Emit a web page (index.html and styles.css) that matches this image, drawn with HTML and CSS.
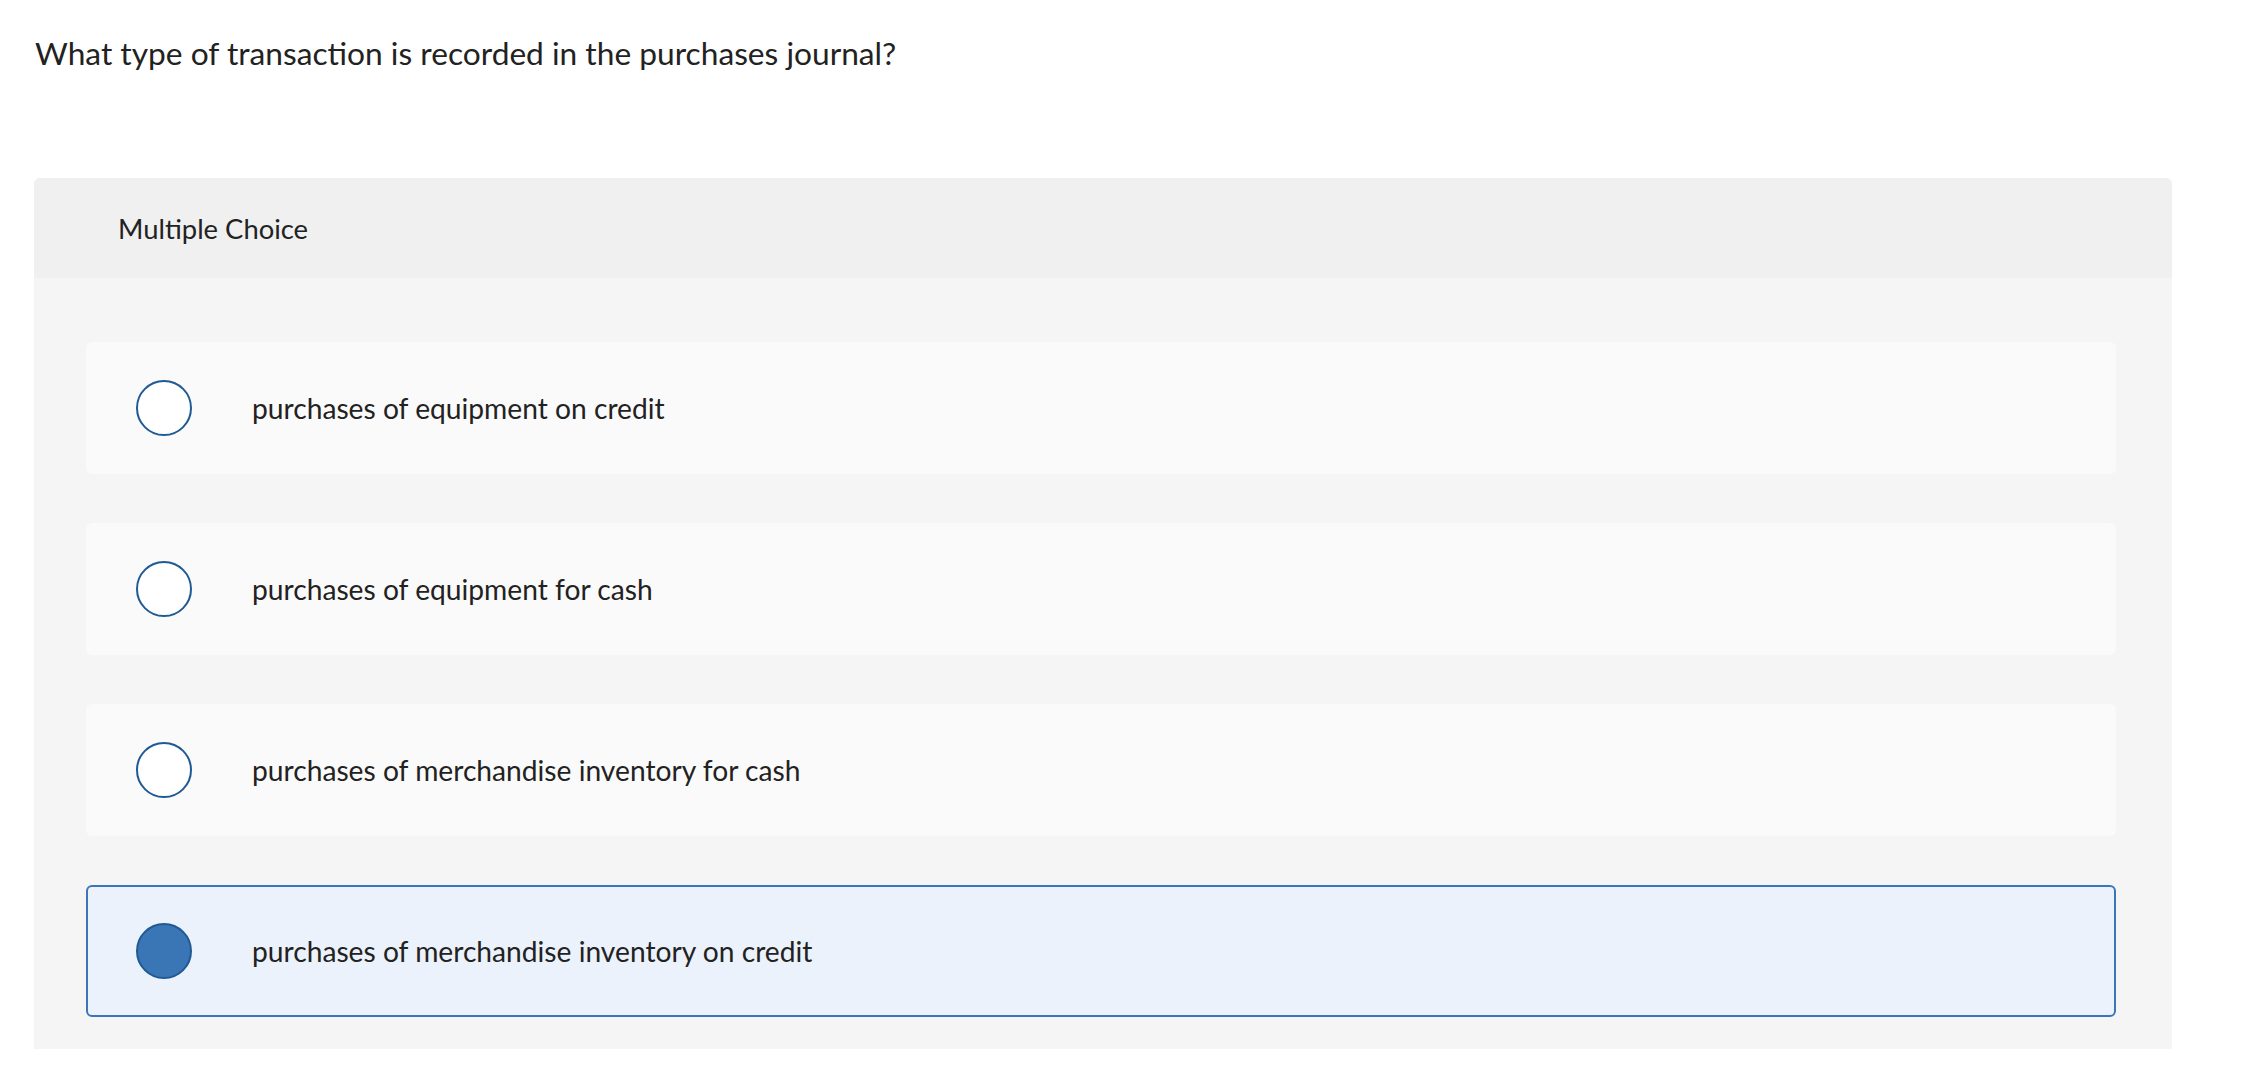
FILE: index.html
```html
<!DOCTYPE html>
<html>
<head>
<meta charset="utf-8">
<link rel="stylesheet" href="styles.css">
</head>
<body>
<div class="question">What type of transaction is recorded in the purchases journal?</div>
<div class="card">
  <div class="card-head">Multiple Choice</div>
  <div class="card-body">
    <div class="option"><span class="radio"></span><span class="label">purchases of equipment on credit</span></div>
    <div class="option"><span class="radio"></span><span class="label">purchases of equipment for cash</span></div>
    <div class="option"><span class="radio"></span><span class="label">purchases of merchandise inventory for cash</span></div>
    <div class="option selected"><span class="radio"></span><span class="label">purchases of merchandise inventory on credit</span></div>
  </div>
</div>
</body>
</html>
```
FILE: styles.css
```css
html, body {
  margin: 0;
  padding: 0;
  background: #ffffff;
}
body {
  font-family: Lato, "Open Sans", sans-serif;
  color: #222222;
}
.question {
  padding: 34px 0 0 35px;
  height: 178px;
  box-sizing: border-box;
  font-size: 31.7px;
  line-height: 38px;
}
.card {
  margin-left: 34px;
  width: 2138px;
  border-radius: 6px 6px 0 0;
  overflow: hidden;
  background: #f5f5f5;
}
.card-head {
  height: 100px;
  background: #f0f0f0;
  display: flex;
  align-items: center;
  padding-left: 84px;
  font-size: 27.4px;
}
.card-body {
  padding: 64px 56px 32px 52px;
  display: flex;
  flex-direction: column;
  gap: 49px;
}
.option {
  height: 132px;
  box-sizing: border-box;
  background: #fafafa;
  border-radius: 6px;
  display: flex;
  align-items: center;
  padding-left: 50px;
}
.radio {
  width: 56px;
  height: 56px;
  box-sizing: border-box;
  border-radius: 50%;
  border: 2px solid #1f5a94;
  background: #ffffff;
  flex: none;
}
.label {
  margin-left: 60px;
  font-size: 28.2px;
}
.option.selected {
  background: #ebf2fb;
  border: 2px solid #3a76b8;
  padding-left: 48px;
}
.option.selected .radio {
  background: #3a75b6;
  border-color: #1f5a94;
}
```
